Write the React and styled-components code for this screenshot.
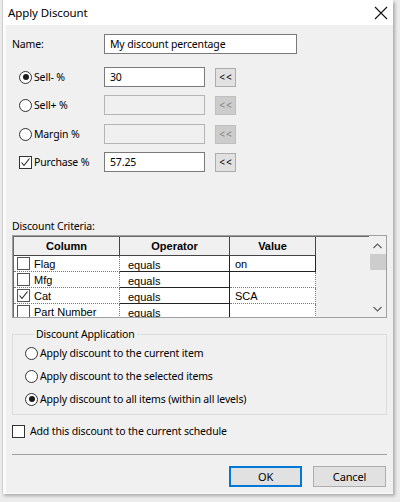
import React from "react";
import styled, { createGlobalStyle } from "styled-components";

const Global = createGlobalStyle`
  html, body { margin: 0; padding: 0; }
  body {
    background: #ececec;
    width: 400px;
    height: 502px;
    overflow: hidden;
    font-family: "Noto Sans", "Open Sans", sans-serif;
    font-size: 10.5px;
    letter-spacing: -0.15px;
    color: #000;
  }
`;

const Window = styled.div`
  margin-left: 2px;
  width: 391px;
  height: 494px;
  display: flex;
  flex-direction: column;
  border-left: 1px solid #cfcfcf;
  box-sizing: border-box;
  box-shadow: 2px 2px 3px rgba(0, 0, 0, 0.28);
  background: #f0f0f0;
`;

const TitleBar = styled.div`
  height: 25px;
  background: #fff;
  display: flex;
  align-items: center;
  justify-content: space-between;
  padding: 0 5px 0 5px;
  font-size: 11.5px;
  letter-spacing: -0.1px;
  flex-shrink: 0;
`;

const Body = styled.div`
  flex: 1;
  border-left: 3px solid #fbfbfb;
  border-bottom: 1px solid #fbfbfb;
  padding: 9px 6px 0 6px;
  display: flex;
  flex-direction: column;
`;

const Row = styled.div`
  display: flex;
  align-items: center;
  height: 20px;
  margin-top: ${(p) => p.$mt || 0}px;
  padding-left: ${(p) => p.$indent || 0}px;
`;

const Label = styled.div`
  width: ${(p) => p.$w}px;
  display: flex;
  align-items: center;
  gap: ${(p) => p.$gap || 2}px;
  white-space: nowrap;
`;

const Input = styled.div`
  width: ${(p) => p.$w}px;
  height: 20px;
  box-sizing: border-box;
  border: 1px solid ${(p) => (p.$disabled ? "#b5b5b5" : "#7a7a7a")};
  background: ${(p) => (p.$disabled ? "#f0f0f0" : "#fff")};
  display: flex;
  align-items: center;
  padding-left: 5px;
`;

const SmallBtn = styled.div`
  width: 21px;
  height: 19px;
  margin-left: 10px;
  box-sizing: border-box;
  border: 1px solid ${(p) => (p.$disabled ? "#bfbfbf" : "#adadad")};
  background: ${(p) => (p.$disabled ? "#cccccc" : "#e1e1e1")};
  color: ${(p) => (p.$disabled ? "#838383" : "#000")};
  display: flex;
  align-items: center;
  justify-content: center;
  font-size: 10px;
  letter-spacing: 1px;
  padding-left: 1px;
`;

const RadioCircle = styled.span`
  width: 13px;
  height: 13px;
  box-sizing: border-box;
  border-radius: 50%;
  border: 1px solid #333;
  background: #fff;
  display: inline-flex;
  align-items: center;
  justify-content: center;
  flex-shrink: 0;
  &::after {
    content: "";
    width: 6px;
    height: 6px;
    border-radius: 50%;
    background: ${(p) => (p.$on ? "#1a1a1a" : "transparent")};
  }
`;

const Box = styled.span`
  width: 13px;
  height: 13px;
  box-sizing: border-box;
  border: 1px solid ${(p) => p.$c || "#333"};
  background: #fff;
  display: inline-flex;
  align-items: center;
  justify-content: center;
  flex-shrink: 0;
`;

const Check = ({ on, color }) => (
  <Box $c={color}>
    {on && (
      <svg width="11" height="11" viewBox="0 0 11 11">
        <path d="M1.5 5.5 L4 8.5 L9.5 1.5" fill="none" stroke="#222" strokeWidth="1.1" />
      </svg>
    )}
  </Box>
);

const SectionLabel = styled.div`
  margin-top: ${(p) => p.$mt}px;
  height: 14px;
  line-height: 14px;
`;

const Grid = styled.div`
  margin-top: 2px;
  height: 83px;
  box-sizing: border-box;
  border: 1px solid #a0a0a0;
  display: flex;
  overflow: hidden;
  font-family: "Liberation Sans", Arial, sans-serif;
  font-size: 11px;
  letter-spacing: 0;
`;

const GridInner = styled.div`
  flex: 1;
  border-top: 1px solid #696969;
  border-left: 1px solid #696969;
  background: #f0f0f0;
  display: flex;
  flex-direction: column;
`;

const GridRow = styled.div`
  display: flex;
  height: ${(p) => p.$h}px;
  flex-shrink: 0;
`;

const HeadCell = styled.div`
  width: ${(p) => p.$w}px;
  box-sizing: border-box;
  border-right: 1px solid #444;
  border-bottom: 1px solid #444;
  display: flex;
  align-items: center;
  justify-content: center;
  font-weight: bold;
`;

const Cell = styled.div`
  width: ${(p) => p.$w}px;
  box-sizing: border-box;
  background: #fff;
  border-right: 1px ${(p) => (p.$solidR ? "solid #222" : "dotted #777")};
  border-bottom: 1px ${(p) => (p.$solidB ? "solid #222" : "dotted #777")};
  display: flex;
  align-items: ${(p) => (p.$low ? "flex-end" : "center")};
  gap: 4px;
  padding-left: ${(p) => p.$pl}px;
  white-space: nowrap;
  overflow: hidden;
`;

const ScrollBar = styled.div`
  width: 17px;
  background: #f0f0f0;
  display: flex;
  flex-direction: column;
  align-items: center;
  padding-top: 1px;
`;

const Arrow = styled.div`
  height: 17px;
  width: 17px;
  display: flex;
  align-items: center;
  justify-content: center;
`;

const Thumb = styled.div`
  width: 16px;
  height: 16px;
  background: #cdcdcd;
`;

const Spacer = styled.div`
  flex: 1;
`;

const Group = styled.fieldset`
  margin: 10px 0 0 0;
  padding: 4px 0 8px 12px;
  border: 1px solid #dcdcdc;
  height: 87px;
  box-sizing: border-box;
  display: flex;
  flex-direction: column;
  gap: 7px;
  legend {
    padding: 0 2px;
    margin-left: 9px;
    line-height: 13px;
  }
`;

const Option = styled.div`
  display: flex;
  align-items: center;
  gap: 2px;
  height: 16px;
`;

const Separator = styled.div`
  margin-top: 13px;
  height: 1px;
  background: #a0a0a0;
`;

const ButtonRow = styled.div`
  display: flex;
  justify-content: flex-end;
  gap: 11px;
  margin-top: 11px;
  padding-right: 1px;
`;

const Button = styled.div`
  width: 73px;
  height: 21px;
  box-sizing: border-box;
  border: ${(p) => (p.$default ? "2px solid #0078d7" : "1px solid #adadad")};
  background: #e1e1e1;
  display: flex;
  align-items: center;
  justify-content: center;
  font-size: 11px;
`;

const rows = [
  { name: "Flag", on: false, val: "on" },
  { name: "Mfg", on: false, val: "" },
  { name: "Cat", on: true, val: "SCA" },
  { name: "Part Number", on: false, val: "" },
];

export default function App() {
  return (
    <>
      <Global />
      <Window>
        <TitleBar>
          <span>Apply Discount</span>
          <svg width="14" height="14" viewBox="0 0 14 14">
            <path d="M1 1 L13 13 M13 1 L1 13" stroke="#111" strokeWidth="1.1" />
          </svg>
        </TitleBar>
        <Body>
          <Row>
            <Label $w={92}>Name:</Label>
            <Input $w={193}>My discount percentage</Input>
          </Row>
          <Row $mt={13} $indent={7}>
            <Label $w={85}>
              <RadioCircle $on />
              Sell- %
            </Label>
            <Input $w={101}>30</Input>
            <SmallBtn>&lt;&lt;</SmallBtn>
          </Row>
          <Row $mt={8} $indent={7}>
            <Label $w={85}>
              <RadioCircle />
              Sell+ %
            </Label>
            <Input $w={101} $disabled />
            <SmallBtn $disabled>&lt;&lt;</SmallBtn>
          </Row>
          <Row $mt={9} $indent={7}>
            <Label $w={85}>
              <RadioCircle />
              Margin %
            </Label>
            <Input $w={101} $disabled />
            <SmallBtn $disabled>&lt;&lt;</SmallBtn>
          </Row>
          <Row $mt={8} $indent={7}>
            <Label $w={85}>
              <Check on />
              Purchase %
            </Label>
            <Input $w={101}>57.25</Input>
            <SmallBtn>&lt;&lt;</SmallBtn>
          </Row>
          <SectionLabel $mt={47}>Discount Criteria:</SectionLabel>
          <Grid>
            <GridInner>
              <GridRow $h={19}>
                <HeadCell $w={106}>Column</HeadCell>
                <HeadCell $w={110}>Operator</HeadCell>
                <HeadCell $w={86}>Value</HeadCell>
              </GridRow>
              {rows.map((r, i) => (
                <GridRow $h={16} key={r.name}>
                  <Cell $w={106} $pl={3}>
                    <Check on={r.on} color="#555" />
                    {r.name}
                  </Cell>
                  <Cell $w={110} $pl={8} $low $solidR $solidB={i < 3}>
                    equals
                  </Cell>
                  <Cell $w={86} $pl={5} $solidR={i === 0} $solidB={i === 0}>
                    {r.val}
                  </Cell>
                </GridRow>
              ))}
            </GridInner>
            <ScrollBar>
              <Arrow>
                <svg width="9" height="6" viewBox="0 0 9 6">
                  <path d="M0.5 5 L4.5 1 L8.5 5" fill="none" stroke="#606060" strokeWidth="1.2" />
                </svg>
              </Arrow>
              <Thumb />
              <Spacer />
              <Arrow>
                <svg width="9" height="6" viewBox="0 0 9 6">
                  <path d="M0.5 1 L4.5 5 L8.5 1" fill="none" stroke="#606060" strokeWidth="1.2" />
                </svg>
              </Arrow>
            </ScrollBar>
          </Grid>
          <Group>
            <legend>Discount Application</legend>
            <Option>
              <RadioCircle />
              Apply discount to the current item
            </Option>
            <Option>
              <RadioCircle />
              Apply discount to the selected items
            </Option>
            <Option>
              <RadioCircle $on />
              Apply discount to all items (within all levels)
            </Option>
          </Group>
          <Row $mt={6}>
            <Label $w={300} $gap={5}>
              <Check />
              Add this discount to the current schedule
            </Label>
          </Row>
          <Separator />
          <ButtonRow>
            <Button $default>OK</Button>
            <Button>Cancel</Button>
          </ButtonRow>
        </Body>
      </Window>
    </>
  );
}
